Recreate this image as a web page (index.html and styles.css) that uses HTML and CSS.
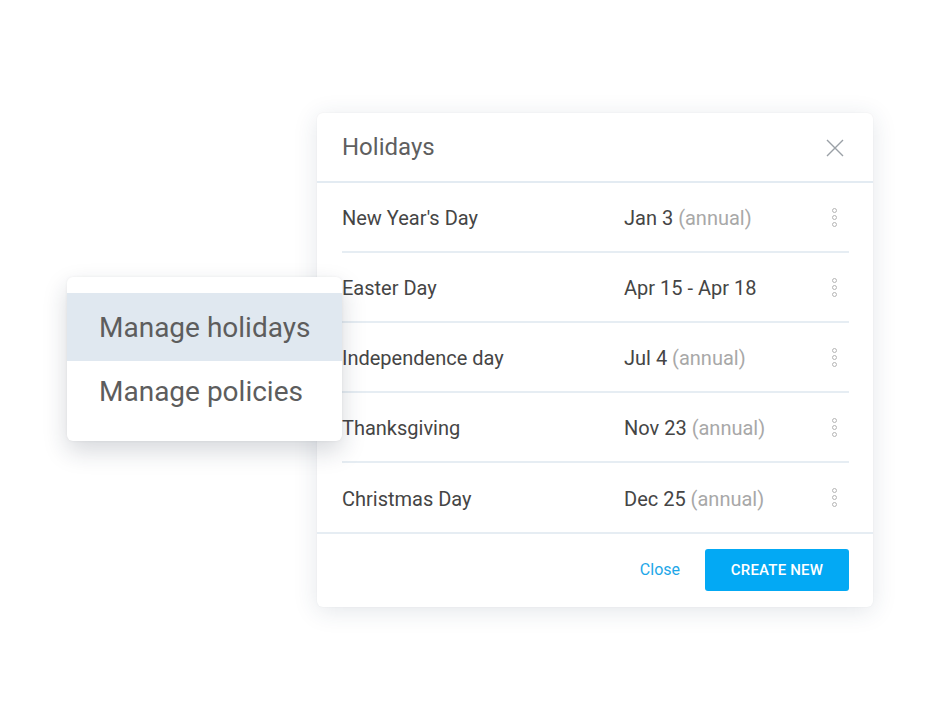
FILE: index.html
```html
<!DOCTYPE html>
<html>
<head>
<meta charset="utf-8">
<link rel="stylesheet" href="styles.css">
</head>
<body>
<div class="stage">
  <div class="card">
    <div class="card-header">
      <div class="title">Holidays</div>
      <svg class="close-x" width="20" height="20" viewBox="0 0 20 20"><path d="M2 2 L18 18 M18 2 L2 18" stroke="#9aa0a6" stroke-width="1.4" fill="none"/></svg>
    </div>
    <div class="rows">
      <div class="row"><span class="name">New Year's Day</span><span class="date">Jan 3 <span class="annual">(annual)</span></span><span class="dots"><i></i><i></i><i></i></span></div>
      <div class="row"><span class="name">Easter Day</span><span class="date">Apr 15 - Apr 18</span><span class="dots"><i></i><i></i><i></i></span></div>
      <div class="row"><span class="name">Independence day</span><span class="date">Jul 4 <span class="annual">(annual)</span></span><span class="dots"><i></i><i></i><i></i></span></div>
      <div class="row"><span class="name">Thanksgiving</span><span class="date">Nov 23 <span class="annual">(annual)</span></span><span class="dots"><i></i><i></i><i></i></span></div>
      <div class="row"><span class="name">Christmas Day</span><span class="date">Dec 25 <span class="annual">(annual)</span></span><span class="dots"><i></i><i></i><i></i></span></div>
    </div>
    <div class="card-footer">
      <span class="link">Close</span>
      <span class="btn">CREATE NEW</span>
    </div>
  </div>
  <div class="menu">
    <div class="menu-item active">Manage holidays</div>
    <div class="menu-item second">Manage policies</div>
  </div>
</div>
</body>
</html>
```
FILE: styles.css
```css
* { box-sizing: border-box; }
html, body { margin: 0; padding: 0; background: #fff; }
body { font-family: Roboto, "Liberation Sans", sans-serif; width: 940px; height: 721px; overflow: hidden; }
.stage { position: relative; width: 940px; height: 721px; padding: 113px 0 0 317px; }
.card {
  width: 556px;
  height: 494px;
  background: #fff;
  border-radius: 6px;
  box-shadow: 0 4px 24px rgba(40, 60, 90, 0.13), 0 0 2px rgba(0,0,0,0.05);
  display: flex;
  flex-direction: column;
}
.card-header {
  height: 70px;
  border-bottom: 2px solid #e3ebf2;
  display: flex;
  align-items: center;
  justify-content: space-between;
  padding: 0 28px 0 25px;
}
.title { font-size: 24px; color: #5f5f5f; }
.close-x { display: block; margin-top: 2px; }
.rows { padding: 0 24px 0 25px; }
.row {
  height: 70px;
  display: flex;
  align-items: center;
  border-bottom: 2px solid #e6edf3;
  font-size: 20px;
  color: #454545;
  padding-top: 2px;
}
.row:last-child { border-bottom: none; height: 69px; }
.name { width: 282px; }
.date { flex: 1; }
.annual { color: #a8a8a8; }
.dots { display: flex; flex-direction: column; gap: 2px; margin-right: 12px; margin-top: -2px; }
.dots i { display: block; width: 5px; height: 5px; border: 1px solid #b5b5b5; border-radius: 50%; }
.card-footer {
  flex: 1;
  border-top: 2px solid #e6edf3;
  display: flex;
  align-items: center;
  justify-content: flex-end;
  padding: 0 24px 2px 0;
  gap: 25px;
}
.link { color: #1ea7e8; font-size: 16px; }
.btn {
  width: 144px;
  height: 42px;
  background: #03a9f4;
  color: #fff;
  border-radius: 3px;
  font-size: 15px;
  font-weight: 500;
  display: flex;
  align-items: center;
  justify-content: center;
  letter-spacing: 0.2px;
}
.menu {
  position: absolute;
  left: 67px;
  top: 277px;
  width: 275px;
  height: 164px;
  background: #fff;
  border-radius: 6px;
  padding-top: 16px;
  box-shadow: 0 10px 24px rgba(30, 40, 60, 0.18), 0 0 3px rgba(0,0,0,0.06);
}
.menu-item {
  padding-left: 32px;
  display: flex;
  align-items: center;
  font-size: 28px;
  color: #5d5d5d;
}
.menu-item.active { background: #e0e8f0; height: 68px; }
.menu-item.second { height: 61px; }
```
